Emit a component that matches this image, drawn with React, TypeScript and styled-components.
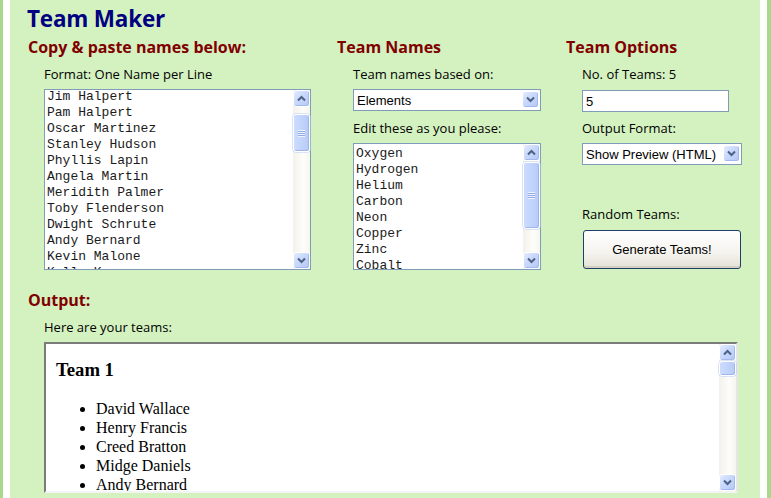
import { useEffect, useRef } from 'react';
import styled, { createGlobalStyle } from 'styled-components';

const GlobalStyle = createGlobalStyle`
  html, body {
    margin: 0;
    padding: 0;
    background: #fff;
  }
  body {
    font-family: "Open Sans", "Liberation Sans", sans-serif;
  }
`;

const names = [
  'Michael Scott',
  'Jan Levinson',
  'Jim Halpert',
  'Pam Halpert',
  'Oscar Martinez',
  'Stanley Hudson',
  'Phyllis Lapin',
  'Angela Martin',
  'Meridith Palmer',
  'Toby Flenderson',
  'Dwight Schrute',
  'Andy Bernard',
  'Kevin Malone',
  'Kelly Kapoor',
  'Ryan Howard',
  'Creed Bratton',
  'Darryl Philbin',
  'Roy Anderson',
  'David Wallace',
  'Henry Francis',
  'Midge Daniels',
  'Karen Filippelli',
  'Holly Flax',
  'Erin Hannon',
  'Gabe Lewis',
  'Nellie Bertram',
  'Clark Green',
  'Pete Miller',
  'Todd Packer',
  'Hank Tate',
  'Bob Vance',
  'Jo Bennett',
  'Nate Nickerson',
  'Val Johnson',
  'Danny Cordray',
  'Charles Miner',
  'Lonny Collins',
  'Madge Madsen',
  'Jerry DiCanio',
  'Glenn Davis',
];

const elements = ['Oxygen', 'Hydrogen', 'Helium', 'Carbon', 'Neon', 'Copper', 'Zinc', 'Cobalt', 'Iron', 'Gold', 'Silver'];

const teamOne = ['David Wallace', 'Henry Francis', 'Creed Bratton', 'Midge Daniels', 'Andy Bernard', 'Kelly Kapoor', 'Toby Flenderson', 'Jan Levinson'];

const Frame = styled.div`
  height: 498px;
  box-sizing: border-box;
  border-left: 3px solid #a8d98b;
  border-right: 4px solid #a8d98b;
  padding: 0 7px;
  background: #fff;
  overflow: hidden;
`;

const Panel = styled.div`
  height: 100%;
  box-sizing: border-box;
  background: #d4f2c0;
  padding: 5px 0 0 18px;
`;

const Title = styled.h1`
  margin: 0 0 4px -1px;
  font-size: 22.5px;
  line-height: 28px;
  font-weight: 700;
  color: #000080;
  letter-spacing: -0.2px;
`;

const Heading = styled.h2`
  margin: 0;
  font-size: 16px;
  line-height: 20px;
  font-weight: 700;
  color: #800000;
`;

const Columns = styled.div`
  display: grid;
  grid-template-columns: 309px 229px 1fr;
`;

const Body = styled.div`
  padding: 9px 0 0 16px;
  display: flex;
  flex-direction: column;
  align-items: flex-start;
`;

const Label = styled.div<{ $gap?: number }>`
  font-size: 13px;
  line-height: 16px;
  color: #000;
  margin-bottom: ${(p) => p.$gap ?? 7}px;
`;

const Spacer = styled.div<{ $h: number }>`
  height: ${(p) => p.$h}px;
`;

const Field = styled.div<{ $w: number; $h: number }>`
  width: ${(p) => p.$w}px;
  height: ${(p) => p.$h}px;
  box-sizing: border-box;
  border: 1px solid #7f9db9;
  background: #fff;
  display: flex;
`;

const TextArea = styled.textarea`
  flex: 1;
  min-width: 0;
  border: none;
  outline: none;
  resize: none;
  overflow: hidden;
  margin: 0;
  padding: 2px 2px;
  font-family: "Liberation Mono", "Courier New", monospace;
  font-size: 13px;
  line-height: 16px;
  color: #1a1a1a;
  background: #fff;
`;

const Bar = styled.div`
  width: 17px;
  display: flex;
  flex-direction: column;
  background: linear-gradient(90deg, #f3f1ea 0%, #fdfdfa 60%, #f6f5f0 100%);
`;

const ScrollButton = styled.div`
  width: 17px;
  height: 17px;
  box-sizing: border-box;
  flex: none;
  border: 1px solid #fff;
  border-radius: 3px;
  background: linear-gradient(135deg, #e4ecfe 0%, #c8d8fc 45%, #b4c8f6 100%);
  box-shadow: inset -1px -1px 0 #a3b9ee;
  display: flex;
  align-items: center;
  justify-content: center;
`;

const Track = styled.div`
  flex: 1;
  display: flex;
  flex-direction: column;
`;

const Thumb = styled.div<{ $top: number; $size: number }>`
  margin-top: ${(p) => p.$top}px;
  height: ${(p) => p.$size}px;
  box-sizing: border-box;
  border: 1px solid #fff;
  border-radius: 3px;
  background: linear-gradient(90deg, #cddbfd 0%, #c2d4fc 50%, #b5caf7 100%);
  box-shadow: inset -1px -1px 0 #9fb6ec, 0 0 0 0.5px #b8cbf5;
  display: flex;
  align-items: center;
  justify-content: center;
`;

const Grip = styled.div`
  width: 7px;
  height: 7px;
  background: repeating-linear-gradient(180deg, #eef3fe 0 1px, #8faae6 1px 2px);
`;

function Chevron({ down }: { down?: boolean }) {
  return (
    <svg width="9" height="7" viewBox="0 0 9 7">
      <polyline
        points={down ? '1,1.5 4.5,5 8,1.5' : '1,5.5 4.5,2 8,5.5'}
        fill="none"
        stroke="#4d6185"
        strokeWidth="2"
      />
    </svg>
  );
}

function ScrollBar({ top, size }: { top: number; size: number }) {
  return (
    <Bar>
      <ScrollButton>
        <Chevron />
      </ScrollButton>
      <Track>
        <Thumb $top={top} $size={size}>
          {size > 20 && <Grip />}
        </Thumb>
      </Track>
      <ScrollButton>
        <Chevron down />
      </ScrollButton>
    </Bar>
  );
}

function ScrollText({ w, h, lines, scroll, top, size }: { w: number; h: number; lines: string[]; scroll: number; top: number; size: number }) {
  const ref = useRef<HTMLTextAreaElement>(null);
  useEffect(() => {
    if (ref.current) ref.current.scrollTop = scroll;
  }, [scroll]);
  return (
    <Field $w={w} $h={h}>
      <TextArea ref={ref} defaultValue={lines.join('\n')} spellCheck={false} />
      <ScrollBar top={top} size={size} />
    </Field>
  );
}

const NativeSelect = styled.select`
  flex: 1;
  min-width: 0;
  appearance: none;
  border: none;
  outline: none;
  background: transparent;
  margin: 0;
  padding: 0 0 0 3px;
  font-family: "Liberation Sans", Arial, sans-serif;
  font-size: 13px;
  color: #000;
`;

const DropWrap = styled.div`
  padding: 1px;
  display: flex;
`;

function Select({ w, options }: { w: number; options: string[] }) {
  return (
    <Field $w={w} $h={22}>
      <NativeSelect defaultValue={options[0]}>
        {options.map((o) => (
          <option key={o}>{o}</option>
        ))}
      </NativeSelect>
      <DropWrap>
        <ScrollButton>
          <Chevron down />
        </ScrollButton>
      </DropWrap>
    </Field>
  );
}

const NumberInput = styled.input`
  width: 147px;
  height: 22px;
  box-sizing: border-box;
  border: 1px solid #7f9db9;
  padding: 0 3px;
  margin: 0;
  font-family: "Liberation Sans", Arial, sans-serif;
  font-size: 13px;
  color: #000;
  outline: none;
`;

const Button = styled.button`
  width: 158px;
  height: 39px;
  margin-left: 1px;
  border: 1px solid #1f3e68;
  border-radius: 3px;
  background: linear-gradient(180deg, #ffffff 0%, #f4f3ee 60%, #e3e1d6 100%);
  box-shadow: inset 0 -2px 0 #d6d0c0;
  font-family: "Liberation Sans", Arial, sans-serif;
  font-size: 13px;
  color: #000;
`;

const OutputSection = styled.div`
  margin-top: 20px;
`;

const OutputBox = styled.div`
  width: 694px;
  height: 151px;
  box-sizing: border-box;
  border: 2px solid;
  border-color: #7b7b7b #e6e6e6 #f4f4f4 #7b7b7b;
  background: #fff;
  display: flex;
`;

const Preview = styled.div`
  flex: 1;
  overflow: hidden;
  padding: 15px 10px 0;
  font-family: "Liberation Serif", "Times New Roman", serif;
  color: #000;
`;

const TeamTitle = styled.h3`
  margin: 0 0 19px;
  font-size: 18.7px;
  font-weight: 700;
  line-height: 21px;
`;

const List = styled.ul`
  margin: 0;
  padding-left: 40px;
  font-size: 16px;
  line-height: 19px;
`;

export default function App() {
  return (
    <>
      <GlobalStyle />
      <Frame>
        <Panel>
          <Title>Team Maker</Title>
          <Columns>
            <div>
              <Heading>Copy &amp; paste names below:</Heading>
              <Body>
                <Label>Format: One Name per Line</Label>
                <ScrollText w={267} h={181} lines={names} scroll={35} top={7} size={38} />
              </Body>
            </div>
            <div>
              <Heading>Team Names</Heading>
              <Body>
                <Label>Team names based on:</Label>
                <Select w={188} options={['Elements', 'Animals', 'Colors', 'Numbers']} />
                <Spacer $h={9} />
                <Label>Edit these as you please:</Label>
                <ScrollText w={188} h={127} lines={elements} scroll={0} top={1} size={67} />
              </Body>
            </div>
            <div>
              <Heading>Team Options</Heading>
              <Body>
                <Label $gap={8}>No. of Teams: 5</Label>
                <NumberInput defaultValue="5" />
                <Spacer $h={8} />
                <Label>Output Format:</Label>
                <Select w={160} options={['Show Preview (HTML)', 'Plain Text']} />
                <Spacer $h={41} />
                <Label $gap={8}>Random Teams:</Label>
                <Button>Generate Teams!</Button>
              </Body>
            </div>
          </Columns>
          <OutputSection>
            <Heading>Output:</Heading>
            <Body>
              <Label>Here are your teams:</Label>
              <OutputBox>
                <Preview>
                  <TeamTitle>Team 1</TeamTitle>
                  <List>
                    {teamOne.map((n) => (
                      <li key={n}>{n}</li>
                    ))}
                  </List>
                </Preview>
                <ScrollBar top={0} size={15} />
              </OutputBox>
            </Body>
          </OutputSection>
        </Panel>
      </Frame>
    </>
  );
}
